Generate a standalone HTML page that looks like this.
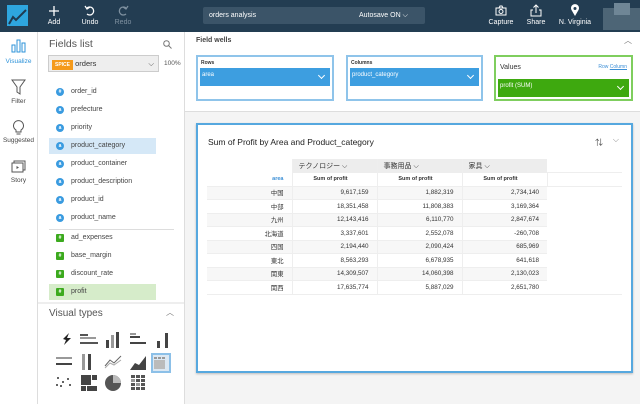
<!DOCTYPE html>
<html><head><meta charset="utf-8"><style>
*{margin:0;padding:0;box-sizing:border-box}
body{width:640px;height:404px;overflow:hidden;font-family:"Liberation Sans","Noto Sans CJK JP",sans-serif;background:#f4f4f4;position:relative;color:#333}
.a{position:absolute}
#top{left:0;top:0;width:640px;height:32px;background:#233d52}
.tb{color:#fff;font-size:7px;text-align:center;position:absolute;top:19px}
#rail{left:0;top:32px;width:38px;height:372px;background:#fff;border-right:1px solid #ddd}
.rl{position:absolute;width:37px;text-align:center;font-size:6.5px;color:#444}
#fp{left:38px;top:32px;width:147px;height:372px;background:#fff;border-right:1px solid #ddd}
.f{position:absolute;left:11px;width:107px;height:16px;font-size:7px;color:#444;line-height:16px;padding-left:22px}
.f i{position:absolute;left:7px;top:4px;width:8px;height:8px;border-radius:50%;background:#3a9be0;color:#fff;font-size:5px;line-height:8px;text-align:center;font-style:normal;font-weight:bold}
.f i.g{border-radius:1px;background:#3caa1e}
#wells{left:185px;top:32px;width:455px;height:80px;background:#fff;border-bottom:1px solid #ddd}
.w{position:absolute;top:23px;height:46px;border:2px solid #8fc4ea;background:#fff}
.w .l{font-size:5px;font-weight:bold;margin:3px 0 0 3px;color:#333}
.dd{position:absolute;left:2px;right:2px;height:18px;background:#3d9ee0;color:#fff;font-size:6px;padding:4px 0 0 2px}
.dd:after{content:"";position:absolute;right:6px;top:5px;width:4px;height:4px;border-right:1px solid #fff;border-bottom:1px solid #fff;transform:rotate(45deg)}
#card{left:196px;top:123px;width:437px;height:250px;background:#fff;border:2px solid #56a8df;box-shadow:0 1px 2px #bbb}
table{position:absolute;left:9px;top:34px;border-collapse:collapse;font-size:6.3px}
td{height:13.5px;border-bottom:1px solid #eee;text-align:right;padding-right:8px}
td.c{width:85px;border-left:1px solid #eee}
tr:nth-child(odd).d td{background:#f7f7f7}
</style></head><body>
<div id="top" class="a">
 <svg class="a" style="left:7px;top:5px" width="21" height="21"><rect width="21" height="21" fill="#2ea6df"/><path d="M2 19 L6 12 L9 15 L19 5" stroke="#1f3b52" stroke-width="2" fill="none"/></svg>
 <div class="tb" style="left:44px;width:20px">Add</div>
 <svg class="a" style="left:48px;top:5px" width="12" height="12"><path d="M6 1V11M1 6H11" stroke="#fff" stroke-width="1.3"/></svg>
 <div class="tb" style="left:78px;width:24px">Undo</div>
 <svg class="a" style="left:84px;top:5px" width="12" height="12"><path d="M3 3 A4 4 0 1 1 3 9" stroke="#fff" stroke-width="1.3" fill="none"/><path d="M1 1 L3 4 L6 2" stroke="#fff" stroke-width="1.2" fill="none"/></svg>
 <div class="tb" style="left:111px;width:24px;color:#7f91a0">Redo</div>
 <svg class="a" style="left:117px;top:5px" width="12" height="12"><path d="M9 3 A4 4 0 1 0 9 9" stroke="#7f91a0" stroke-width="1.3" fill="none"/><path d="M11 1 L9 4 L6 2" stroke="#7f91a0" stroke-width="1.2" fill="none"/></svg>
 <div class="a" style="left:203px;top:7px;width:222px;height:17px;background:#3b5468;border-radius:2px;color:#fff;font-size:7px;line-height:17px;padding-left:6px">orders analysis<span style="position:absolute;left:156px">Autosave ON ⌵</span></div>
 <svg class="a" style="left:495px;top:5px" width="12" height="11"><rect x="1" y="3" width="10" height="7" fill="none" stroke="#fff"/><circle cx="6" cy="6.5" r="2" fill="none" stroke="#fff"/><path d="M4 3 L5 1 H7 L8 3" stroke="#fff" fill="none"/></svg>
 <div class="tb" style="left:486px;width:30px">Capture</div>
 <svg class="a" style="left:530px;top:4px" width="12" height="13"><path d="M3 6 H1 V12 H11 V6 H9 M6 9 V1 M3.5 3.5 L6 1 L8.5 3.5" stroke="#fff" fill="none"/></svg>
 <div class="tb" style="left:524px;width:24px">Share</div>
 <svg class="a" style="left:570px;top:4px" width="10" height="13"><path d="M5 12 L1.5 6 A4 4 0 1 1 8.5 6Z" fill="#fff"/><circle cx="5" cy="4.5" r="1.5" fill="#233d52"/></svg>
 <div class="tb" style="left:555px;width:40px">N. Virginia</div>
 <div class="a" style="left:603px;top:8px;width:37px;height:22px;background:#4d6576"></div>
 <div class="a" style="left:614px;top:3px;width:16px;height:12px;background:#6f8696"></div>
</div>
<div id="rail" class="a">
 <svg class="a" style="left:11px;top:7px" width="15" height="14"><g fill="none" stroke="#2e93d9"><rect x="1" y="6" width="3" height="7"/><rect x="6" y="1" width="3" height="12"/><rect x="11" y="4" width="3" height="9"/></g></svg>
 <div class="rl" style="top:26px;color:#2e93d9">Visualize</div>
 <svg class="a" style="left:11px;top:47px" width="15" height="16"><path d="M1 1 H14 L9 8 V15 L6 13 V8Z" fill="none" stroke="#555"/></svg>
 <div class="rl" style="top:66px">Filter</div>
 <svg class="a" style="left:13px;top:88px" width="11" height="16"><path d="M3 10 A5 5 0 1 1 8 10 V12 H3Z M3.5 14 H7.5" fill="none" stroke="#555"/></svg>
 <div class="rl" style="top:105px">Suggested</div>
 <svg class="a" style="left:11px;top:128px" width="15" height="13"><rect x="1" y="3" width="11" height="9" fill="none" stroke="#555"/><path d="M3 3V1H14V10H12" fill="none" stroke="#555"/><path d="M5.5 6 L8 7.5 L5.5 9Z" fill="#555"/></svg>
 <div class="rl" style="top:145px">Story</div>
</div>
<div id="fp" class="a">
 <div class="a" style="left:11px;top:6px;font-size:10.5px;color:#555">Fields list</div>
 <svg class="a" style="left:125px;top:8px" width="9" height="9"><circle cx="3.5" cy="3.5" r="2.8" fill="none" stroke="#777"/><path d="M5.5 5.5L8.5 8.5" stroke="#777"/></svg>
 <div class="a" style="left:10px;top:23px;width:111px;height:17px;background:#eee;border:1px solid #ccc;font-size:7.5px;line-height:15px;padding-left:3px"><span style="background:#f59a1b;color:#fff;font-size:5px;padding:2px 3px;font-weight:bold">SPICE</span> orders<span style="position:absolute;right:4px;top:0;color:#555">⌵</span></div>
 <div class="a" style="left:126px;top:28px;font-size:6.5px;color:#555">100%</div>
 <div class="f" style="top:52px"><i>#</i>order_id</div>
 <div class="f" style="top:70px"><i>a</i>prefecture</div>
 <div class="f" style="top:88px"><i>a</i>priority</div>
 <div class="f" style="top:106px;background:#d5e8f7"><i>a</i>product_category</div>
 <div class="f" style="top:124px"><i>a</i>product_container</div>
 <div class="f" style="top:142px"><i>a</i>product_description</div>
 <div class="f" style="top:160px"><i>a</i>product_id</div>
 <div class="f" style="top:178px"><i>a</i>product_name</div>
 <div class="a" style="left:11px;top:197px;width:125px;border-top:1px solid #ddd"></div>
 <div class="f" style="top:198px"><i class="g">#</i>ad_expenses</div>
 <div class="f" style="top:216px"><i class="g">#</i>base_margin</div>
 <div class="f" style="top:234px"><i class="g">#</i>discount_rate</div>
 <div class="f" style="top:252px;background:#d6ecca"><i class="g">#</i>profit</div>
 <div class="a" style="left:0;top:270px;width:146px;height:102px;background:#fff;border-top:2px solid #eee"></div>
 <div class="a" style="left:11px;top:276px;font-size:10px;color:#555">Visual types</div>
 <div class="a" style="left:128px;top:275px;font-size:8px;color:#777">︿</div>
 <div class="a" style="left:113px;top:321px;width:20px;height:20px;border:2px solid #8cc0e8;background:#dce8f3"></div>
 <svg class="a" style="left:12px;top:298px" width="135" height="72" fill="#444">
  <path d="M13 9 L19 3 L17 8 L21 8 L14 15 L16 10 Z" fill="#222"/>
  <rect x="30" y="4" width="8" height="2" fill="#555"/><rect x="30" y="7" width="16" height="2" fill="#999"/><rect x="30" y="12" width="18" height="2" fill="#555"/>
  <rect x="56" y="10" width="3" height="8"/><rect x="61" y="5" width="3" height="13" fill="#999"/><rect x="66" y="2" width="3" height="16"/>
  <rect x="80" y="6" width="10" height="2"/><rect x="80" y="12" width="16" height="2"/><rect x="80" y="3" width="6" height="2" fill="#999"/>
  <rect x="107" y="11" width="3" height="7"/><rect x="115" y="3" width="3" height="15"/>
  <rect x="6" y="27" width="16" height="2" fill="#999"/><rect x="6" y="33" width="16" height="2"/>
  <rect x="32" y="24" width="3" height="16" fill="#999"/><rect x="38" y="24" width="3" height="16"/>
  <path d="M55 36 L60 30 L64 33 L71 26" stroke="#666" fill="none"/><path d="M55 38 L60 33 L64 35 L71 30" stroke="#aaa" fill="none"/>
  <path d="M80 40 L85 33 L89 35 L96 26 V40Z" fill="#444"/>
  <g fill="#999"><rect x="104" y="27" width="3" height="2"/><rect x="108" y="27" width="3" height="2"/><rect x="112" y="27" width="3" height="2"/><rect x="104" y="30" width="11" height="9" fill="#bbb"/></g>
  <g fill="#333"><circle cx="8" cy="48" r="1"/><circle cx="13" cy="52" r="1"/><circle cx="18" cy="49" r="1"/><circle cx="7" cy="55" r="1"/><circle cx="20" cy="55" r="1"/><circle cx="11" cy="56" r="1"/></g>
  <rect x="31" y="45" width="10" height="10"/><rect x="42" y="45" width="5" height="5"/><rect x="31" y="56" width="5" height="5"/><rect x="37" y="56" width="10" height="5"/>
  <circle cx="63" cy="53" r="8" fill="#555"/><path d="M63 53 V45 A8 8 0 0 1 71 53Z" fill="#bbb"/>
  <g fill="#555"><rect x="81" y="45" width="4" height="3"/><rect x="86" y="45" width="4" height="3"/><rect x="91" y="45" width="4" height="3"/><rect x="81" y="49" width="4" height="3" fill="#999"/><rect x="86" y="49" width="4" height="3"/><rect x="91" y="49" width="4" height="3"/><rect x="81" y="53" width="4" height="3"/><rect x="86" y="53" width="4" height="3" fill="#999"/><rect x="91" y="53" width="4" height="3"/><rect x="81" y="57" width="4" height="3"/><rect x="86" y="57" width="4" height="3"/><rect x="91" y="57" width="4" height="3"/></g>
 </svg>
</div>
<div id="wells" class="a">
 <div class="a" style="left:11px;top:5px;font-size:7px;font-weight:bold;color:#444">Field wells</div>
 <div class="a" style="right:8px;top:3px;font-size:8px;color:#777">︿</div>
 <div class="w" style="left:11px;width:138px"><div class="l">Rows</div><div class="dd" style="top:11px">area</div></div>
 <div class="w" style="left:161px;width:137px"><div class="l">Columns</div><div class="dd" style="top:11px">product_category</div></div>
 <div class="w" style="left:309px;width:139px;border-color:#7fce5e"><div style="font-size:7px;margin:7px 0 0 4px">Values</div><div class="a" style="right:4px;top:7px;font-size:5px;color:#3d8fd6">Row <u>Column</u></div><div class="dd" style="top:22px;background:#3ea90f">profit (SUM)</div></div>
</div>
<div id="card" class="a">
 <div class="a" style="left:10px;top:12px;font-size:8.5px;color:#222">Sum of Profit by Area and Product_category</div>
 <div class="a" style="right:28px;top:12px;font-size:8px;color:#444">⇅</div>
 <div class="a" style="right:12px;top:10px;font-size:8px;color:#888">⌵</div>
 <table>
  <tr><td style="width:85px;border:0"></td><td class="c" style="background:#ededed;text-align:left;padding-left:6px;font-size:7px;border-bottom:0">テクノロジー ⌵</td><td class="c" style="background:#ededed;text-align:left;padding-left:6px;font-size:7px;border-bottom:0">事務用品 ⌵</td><td class="c" style="background:#ededed;text-align:left;padding-left:6px;font-size:7px;border-bottom:0">家具 ⌵</td><td style="width:75px;border-bottom:1px solid #eee"></td></tr>
  <tr><td style="color:#3b8fd6;font-weight:bold;font-size:5.5px">area</td><td class="c" style="text-align:center;font-weight:bold;font-size:5.5px">Sum of profit</td><td class="c" style="text-align:center;font-weight:bold;font-size:5.5px">Sum of profit</td><td class="c" style="text-align:center;font-weight:bold;font-size:5.5px">Sum of profit</td><td style="border-left:1px solid #eee"></td></tr>
  <tr class="d"><td>中国</td><td class="c">9,617,159</td><td class="c">1,882,319</td><td class="c">2,734,140</td><td style="border:0;background:#fff"></td></tr>
  <tr class="d"><td>中部</td><td class="c">18,351,458</td><td class="c">11,808,383</td><td class="c">3,169,364</td><td style="border:0;background:#fff"></td></tr>
  <tr class="d"><td>九州</td><td class="c">12,143,416</td><td class="c">6,110,770</td><td class="c">2,847,674</td><td style="border:0;background:#fff"></td></tr>
  <tr class="d"><td>北海道</td><td class="c">3,337,601</td><td class="c">2,552,078</td><td class="c">-260,708</td><td style="border:0;background:#fff"></td></tr>
  <tr class="d"><td>四国</td><td class="c">2,194,440</td><td class="c">2,090,424</td><td class="c">685,969</td><td style="border:0;background:#fff"></td></tr>
  <tr class="d"><td>東北</td><td class="c">8,563,293</td><td class="c">6,678,935</td><td class="c">641,618</td><td style="border:0;background:#fff"></td></tr>
  <tr class="d"><td>関東</td><td class="c">14,309,507</td><td class="c">14,060,398</td><td class="c">2,130,023</td><td style="border:0;background:#fff"></td></tr>
  <tr class="d"><td>関西</td><td class="c">17,635,774</td><td class="c">5,887,029</td><td class="c">2,651,780</td><td style="border-bottom:1px solid #eee;background:#fff"></td></tr>
 </table>
</div>
</body></html>
